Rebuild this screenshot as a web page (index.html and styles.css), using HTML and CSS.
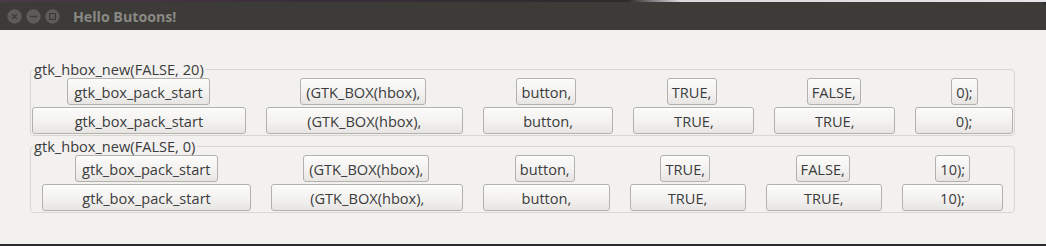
FILE: index.html
```html
<!DOCTYPE html>
<html>
<head>
<meta charset="utf-8">
<link rel="stylesheet" href="styles.css">
</head>
<body>
<div class="screen">
  <div class="desk-top"></div>
  <div class="window">
    <div class="titlebar">
      <div class="controls">
        <span class="wbtn"><svg width="15" height="15" viewBox="0 0 15 15"><circle cx="7.5" cy="7.5" r="7.2" fill="#5d5c58"/><path d="M5 5 L10 10 M10 5 L5 10" stroke="#3c3b37" stroke-width="1.3"/></svg></span>
        <span class="wbtn"><svg width="15" height="15" viewBox="0 0 15 15"><circle cx="7.5" cy="7.5" r="7.2" fill="#5d5c58"/><path d="M3.8 7.5 H11.2" stroke="#3c3b37" stroke-width="1.4"/></svg></span>
        <span class="wbtn"><svg width="15" height="15" viewBox="0 0 15 15"><circle cx="7.5" cy="7.5" r="7.2" fill="#5d5c58"/><rect x="4.6" y="4.6" width="5.8" height="5.8" fill="none" stroke="#3c3b37" stroke-width="1.2"/></svg></span>
      </div>
      <div class="title">Hello Butoons!</div>
    </div>
    <div class="content">
      <fieldset class="frame f1">
        <legend>gtk_hbox_new(FALSE, 20)</legend>
        <div class="row nat sp20">
          <div class="cell"><button class="btn w-gtk">gtk_box_pack_start</button></div>
          <div class="cell"><button class="btn w-hbox">(GTK_BOX(hbox),</button></div>
          <div class="cell"><button class="btn w-button">button,</button></div>
          <div class="cell"><button class="btn w-true">TRUE,</button></div>
          <div class="cell"><button class="btn w-false">FALSE,</button></div>
          <div class="cell"><button class="btn w-0">0);</button></div>
        </div>
        <div class="row fill sp20">
          <button class="btn w-gtk">gtk_box_pack_start</button>
          <button class="btn w-hbox">(GTK_BOX(hbox),</button>
          <button class="btn w-button">button,</button>
          <button class="btn w-true">TRUE,</button>
          <button class="btn w-true">TRUE,</button>
          <button class="btn w-0">0);</button>
        </div>
      </fieldset>
      <fieldset class="frame f2">
        <legend>gtk_hbox_new(FALSE, 0)</legend>
        <div class="row nat pad10">
          <div class="cell"><button class="btn w-gtk">gtk_box_pack_start</button></div>
          <div class="cell"><button class="btn w-hbox">(GTK_BOX(hbox),</button></div>
          <div class="cell"><button class="btn w-button">button,</button></div>
          <div class="cell"><button class="btn w-true">TRUE,</button></div>
          <div class="cell"><button class="btn w-false">FALSE,</button></div>
          <div class="cell"><button class="btn w-10">10);</button></div>
        </div>
        <div class="row fill pad10">
          <button class="btn w-gtk">gtk_box_pack_start</button>
          <button class="btn w-hbox">(GTK_BOX(hbox),</button>
          <button class="btn w-button">button,</button>
          <button class="btn w-true">TRUE,</button>
          <button class="btn w-true">TRUE,</button>
          <button class="btn w-10">10);</button>
        </div>
      </fieldset>
    </div>
  </div>
  <div class="desk-bottom"></div>
</div>
</body>
</html>
```

FILE: styles.css
```css
html, body {
  margin: 0;
  padding: 0;
  background: #2b2a2e;
}
body {
  width: 1046px;
  height: 246px;
  overflow: hidden;
  font-family: "Open Sans", "DejaVu Sans", sans-serif;
}
.screen {
  display: flex;
  flex-direction: column;
  height: 246px;
}
.desk-top {
  height: 2px;
  background: linear-gradient(90deg, #4a3a48 0%, #3a2d3a 30%, #2b2b2b 60%, #d9d8dc 65%, #e6e6ea 100%);
}
.window {
  display: flex;
  flex-direction: column;
  height: 242px;
}
.titlebar {
  height: 28px;
  background: #3c3b37;
  border-top-right-radius: 5px;
  display: flex;
  align-items: center;
}
.controls {
  display: flex;
  gap: 4px;
  padding-left: 7px;
  padding-top: 1px;
}
.wbtn {
  display: block;
  width: 15px;
  height: 15px;
}
.wbtn svg {
  display: block;
}
.title {
  margin-left: 13px;
  color: #8a8985;
  font-weight: bold;
  font-size: 14.2px;
  padding-top: 1px;
}
.content {
  flex: 1;
  background: #f2f1f0;
  padding: 31px 31px 0 30px;
}
.frame {
  margin: 0;
  border: 1px solid #d9d7d3;
  border-radius: 4px;
  padding: 0 1px 1px 1px;
  min-width: 0;
  display: flex;
  flex-direction: column;
  gap: 2px;
}
.f2 {
  margin-top: 2px;
}
.frame legend {
  padding: 0 2px 0 1px;
  margin-left: 1px;
  font-size: 14.6px;
  line-height: 17px;
  color: #3c3c3c;
}
.row {
  display: flex;
  height: 27px;
}
.row.sp20 {
  gap: 20px;
}
.nat .cell {
  flex: 1 1 auto;
  display: flex;
  justify-content: center;
}
.fill .btn {
  flex: 1 1 auto;
}
.btn {
  box-sizing: border-box;
  height: 27px;
  margin: 0;
  padding: 0;
  font-family: inherit;
  font-size: 14.6px;
  color: #3c3c3c;
  border: 1px solid #b3b1ac;
  border-radius: 3px;
  background: linear-gradient(#fbfbfa 0%, #f3f2f1 55%, #e6e5e2 100%);
  box-shadow: inset 0 1px 0 #ffffff;
}
.row.pad10 > .btn,
.row.pad10 > .cell {
  margin: 0 10px;
}
.w-gtk { width: 143px; }
.w-hbox { width: 126px; }
.w-button { width: 60px; }
.w-true { width: 50px; }
.w-false { width: 54px; }
.w-0 { width: 27px; }
.w-10 { width: 35px; }
```
